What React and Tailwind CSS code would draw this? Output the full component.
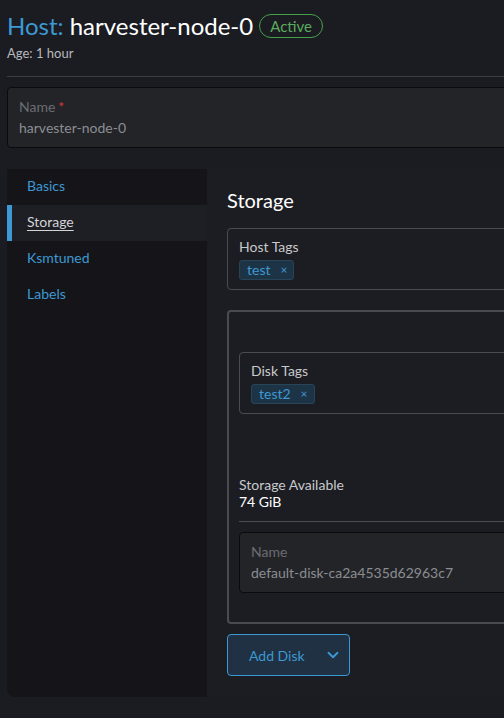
import { ChevronDown } from "lucide-react";

const font = { fontFamily: "Lato, 'Noto Sans', sans-serif" };

function Tag({ label }) {
  return (
    <span className="inline-flex items-center h-[20px] pl-[7px] pr-[6px] rounded-[3px] bg-[#1d3446] border border-[#284558] text-[#3d98d3] text-[14px] leading-none">
      <span>{label}</span>
      <span className="ml-[10px] text-[12px]">×</span>
    </span>
  );
}

function TagBox({ title, tag }) {
  return (
    <div className="border border-[#4b4c51] rounded-[4px] h-[62px] pl-[11px] pt-[9px]">
      <div className="text-[14px] leading-[18px] text-[#c8c9cc]">{title}</div>
      <div className="mt-[4px] flex">
        <Tag label={tag} />
      </div>
    </div>
  );
}

function NameInput({ value, required }) {
  return (
    <div className="h-[61px] bg-[#232427] border border-[#0b0b0d] rounded-[4px] pl-[11px] pt-[10px]">
      <div className="text-[14px] leading-[18px] text-[#6b6d74]">
        Name{required && <span className="text-[#d63a3a] ml-[3px]">*</span>}
      </div>
      <div className="text-[14px] leading-[18px] mt-[3px] text-[#8b8d93]">{value}</div>
    </div>
  );
}

export default function App() {
  const tabs = ["Basics", "Storage", "Ksmtuned", "Labels"];
  return (
    <div className="w-[504px] h-[718px] overflow-hidden bg-[#1b1c21]" style={font}>
      <div className="w-[800px] pl-[7px]">
        {/* Header */}
        <div className="pt-[11px] flex items-center">
          <h1 className="text-[24px] leading-[30px] text-white">
            <span className="text-[#3d98d3]">Host:</span> harvester-node-0
          </h1>
          <span className="ml-[6px] h-[24px] px-[10px] inline-flex items-center rounded-full border border-[#46a04a] text-[#5aab5d] text-[15px]">
            Active
          </span>
        </div>
        <div className="text-[13px] leading-[16px] mt-[4px] text-[#b8b9bd]">Age: 1 hour</div>
        <div className="mt-[15px] h-px bg-[#3d3e43]" />

        <div className="mt-[10px]">
          <NameInput value="harvester-node-0" required />
        </div>

        {/* Tabs */}
        <div className="mt-[21px] flex h-[528px] rounded-b-[8px] overflow-hidden">
          <div className="w-[200px] bg-[#151519]">
            {tabs.map((t) => {
              const active = t === "Storage";
              return (
                <div
                  key={t}
                  className={
                    "h-[36px] flex items-center pb-[3px] text-[14px] " +
                    (active ? "bg-[#1e1f24] border-l-[5px] border-[#3d98d3] pl-[15px] text-[#d3d4d7] underline underline-offset-[3px]" : "pl-[20px] text-[#3d98d3]")
                  }
                >
                  {t}
                </div>
              );
            })}
          </div>
          <div className="flex-1 bg-[#1c1d22] pl-[20px] pt-[19px]">
            <h2 className="text-[20px] leading-[24px] text-white">Storage</h2>
            <div className="mt-[16px]">
              <TagBox title="Host Tags" tag="test" />
            </div>

            <div className="mt-[20px] border-2 border-[#4a4b50] rounded-[4px] h-[314px] pl-[10px] pt-[40px]">
              <TagBox title="Disk Tags" tag="test2" />
              <div className="mt-[62px] text-[14px] leading-[17px] text-[#c8c9cc]">Storage Available</div>
              <div className="text-[14px] leading-[17px] text-white">74 GiB</div>
              <div className="mt-[11px] h-px bg-[#4a4b50]" />
              <div className="mt-[10px]">
                <NameInput value="default-disk-ca2a4535d62963c7" />
              </div>
            </div>

            <button className="mt-[10px] h-[42px] w-[123px] flex items-center rounded-[4px] border border-[#3d98d3] bg-[#1f3142] text-[#3d98d3] text-[14px]">
              <span className="pl-[21px]">Add Disk</span>
              <ChevronDown className="ml-auto mr-[7px]" size={18} strokeWidth={2.5} />
            </button>
          </div>
        </div>
      </div>
    </div>
  );
}
